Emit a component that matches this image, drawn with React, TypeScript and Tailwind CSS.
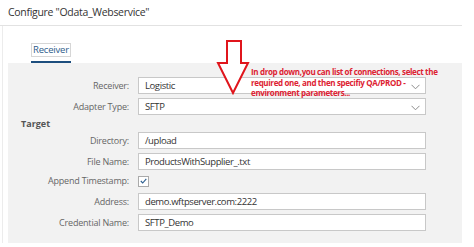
import React from "react"

const font = { fontFamily: '"Open Sans", "Liberation Sans", Arial, sans-serif' }

function Chevron() {
  return (
    <svg width="9" height="6" viewBox="0 0 9 6" className="absolute right-[5px] top-[6px]">
      <path d="M0.5 0.8 L4.5 4.8 L8.5 0.8" fill="none" stroke="#8c8c8c" strokeWidth="1" />
    </svg>
  )
}

function Row({ label, value, select }: { label: string; value: string; select?: boolean }) {
  return (
    <div className="flex items-center h-[17px]">
      <div className="w-[121px] text-right text-[9px] tracking-[-0.2px] text-[#666]">{label}</div>
      <div className="relative ml-[9px] w-[288px] h-[17px] bg-white border border-[#c8c8c8] pl-[6px] text-[9.5px] tracking-[-0.4px] text-[#333] leading-[15px]">
        {value}
        {select && <Chevron />}
      </div>
    </div>
  )
}

export default function App() {
  return (
    <div className="relative w-[474px] h-[247px] bg-white overflow-hidden" style={font}>
      <div className="h-[25px] pl-[8px] pt-[5px] text-[10.5px] tracking-[-0.3px] text-[#333]">Configure "Odata_Webservice"</div>
      <div className="w-[462px] border-t border-[#e2e2e2]" />
      <div className="ml-[2px] w-[460px] border-l border-[#ececec] pl-[5px]">
        <div className="h-[37px] flex items-end pl-[23px]">
          <div className="flex flex-col items-stretch">
            <div className="border border-[#d6d6d6] px-[1px] text-[9.5px] tracking-[-0.2px] text-[#2e5c8a] leading-[12px] mb-[4px]">Receiver</div>
            <div className="h-[2px] bg-[#1d4e7e]" />
          </div>
        </div>
        <div className="bg-[#f2f2f2] h-[180px] pt-[14px] flex flex-col">
          <div className="flex flex-col gap-[4px]">
            <Row label="Receiver:" value="Logistic" select />
            <Row label="Adapter Type:" value="SFTP" select />
          </div>
          <div className="h-[17px] pl-[13px] flex items-center text-[9px] font-bold text-[#555]">Target</div>
          <div className="flex flex-col gap-[4px]">
            <Row label="Directory:" value="/upload" />
            <Row label="File Name:" value="ProductsWithSupplier_.txt" />
            <div className="flex items-center h-[16px] mt-[-1px]">
              <div className="w-[121px] text-right text-[9px] tracking-[-0.2px] text-[#666]">Append Timestamp:</div>
              <div className="ml-[9px] w-[11px] h-[11px] bg-white border border-[#aaa] flex items-center justify-center">
                <svg width="7" height="6" viewBox="0 0 7 6">
                  <path d="M0.8 3 L2.7 5 L6.3 0.8" fill="none" stroke="#2a5d8f" strokeWidth="1.1" />
                </svg>
              </div>
            </div>
            <Row label="Address:" value="demo.wftpserver.com:2222" />
            <Row label="Credential Name:" value="SFTP_Demo" />
          </div>
        </div>
      </div>

      {/* annotation arrow */}
      <svg width="34" height="56" viewBox="0 0 34 56" className="absolute left-[216px] top-[40px]">
        <path d="M11 1 L25 1 L25 23 L32 23 L17 53 L2 23 L11 23 Z" fill="white" stroke="#e0151c" strokeWidth="2" strokeLinejoin="miter" />
      </svg>
      <div className="absolute left-[251px] top-[67px] whitespace-nowrap text-[8px] tracking-[-0.35px] leading-[10.5px] font-bold text-[#dd2232]">
        In drop down,you can list of connections, select the
        <br />
        required one, and then specifiy QA/PROD -
        <br />
        environment parameters...
      </div>
    </div>
  )
}
